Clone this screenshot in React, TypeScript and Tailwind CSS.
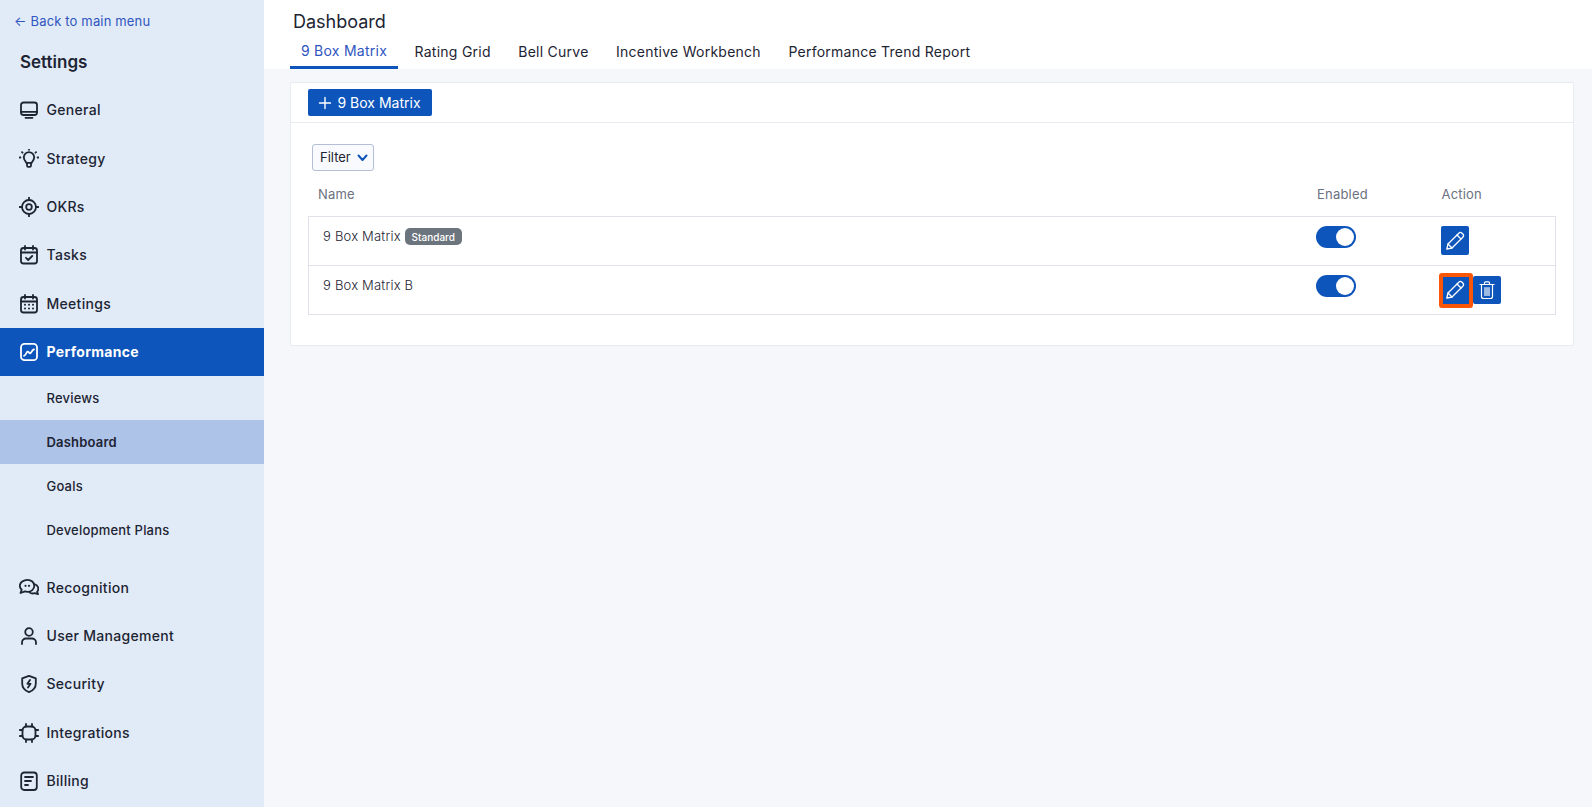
import React from "react";

const Ic = ({ children }: { children: React.ReactNode }) => (
  <svg width="20" height="20" viewBox="0 0 20 20" fill="none" stroke="currentColor" strokeWidth="1.8" strokeLinecap="round" strokeLinejoin="round" className="shrink-0">
    {children}
  </svg>
);

const icons: Record<string, React.ReactNode> = {
  General: (
    <>
      <rect x="2" y="2.500" width="16" height="12.500" rx="2.500" />
      <path d="M2 11.800h16M6.500 17.800h7" />
    </>
  ),
  Strategy: (
    <>
      <path d="M5.300 10.500a5.200 5.200 0 1 1 9.400 0c-.5 1.100-1.500 1.900-1.900 3.300H7.200c-.4-1.400-1.400-2.200-1.900-3.300Z" />
      <path d="M8 14v2.500a1.300 1.300 0 0 0 1.300 1.300h1.400a1.300 1.300 0 0 0 1.300-1.300V14M.600 8.500h.8M18.600 8.500h.8M3 3.200l.5.500M17 3.200l-.5.500M10 .400v.4" />
    </>
  ),
  OKRs: (
    <>
      <circle cx="10" cy="10" r="7" />
      <circle cx="10" cy="10" r="2.800" />
      <path d="M10 .600v2.400M10 17v2.400M.600 10h2.400M17 10h2.400" />
    </>
  ),
  Tasks: (
    <>
      <rect x="2" y="3" width="16" height="15.500" rx="2.500" />
      <path d="M2 7.500h16M6 1v3.500M14 1v3.500M7 12.800l2.200 2.200 4-4" />
    </>
  ),
  Meetings: (
    <>
      <rect x="2" y="3" width="16" height="15.500" rx="2.500" />
      <path d="M2 7.500h16M6 1v3.500M14 1v3.500" />
      <path strokeWidth="2" d="M6 10.800h.01M10 10.800h.01M14 10.800h.01M6 14.600h.01M10 14.600h.01M14 14.600h.01" />
    </>
  ),
  Performance: (
    <>
      <rect x="2" y="1.800" width="16" height="16.400" rx="3.500" />
      <path d="M5 13.800c1.500-.5 2.100-1.900 2.700-3.300.5-1 1.400-1.200 2-.3.600.9 1.300 1.500 2.100.7.900-.9 1-2.600 3.200-3.500" />
    </>
  ),
  Recognition: (
    <>
      <path d="M8.500 1.800c3.800 0 6.800 2.600 6.800 6s-3 6-6.800 6c-.9 0-1.700-.1-2.500-.4L1.500 15l1.200-3.300C1.400 10.600.800 9.300.800 7.800c0-3.400 3.900-6 7.700-6Z" />
      <path d="M15.300 6.200c2.300.7 4 2.400 4 4.600 0 1.200-.5 2.200-1.200 3l.9 2.300-3.400-1c-1.400.5-3.700.4-5.100-.7" />
      <path strokeWidth="2.200" d="M6.500 7.800h.01M10 7.800h.01" />
    </>
  ),
  "User Management": (
    <>
      <circle cx="10" cy="6" r="3.800" />
      <path d="M3 18v-1.500A4 4 0 0 1 7 12.500h6a4 4 0 0 1 4 4V18" />
    </>
  ),
  Security: (
    <>
      <path d="M10 1.800l6.800 2.500v5.200c0 4.200-3 7.200-6.800 8.700-3.800-1.500-6.800-4.500-6.800-8.700V4.300L10 1.800Z" />
      <path d="M11 6l-2.600 3.800h3.200L9 13.500" />
    </>
  ),
  Integrations: (
    <>
      <rect x="3.500" y="3.500" width="13" height="13" rx="4" />
      <path d="M7 1v2.500M13 1v2.500M7 16.500V19M13 16.500V19M.8 7h2.700M.8 13h2.700M16.500 7h2.700M16.500 13h2.700" />
    </>
  ),
  Billing: (
    <>
      <rect x="2.200" y="1.500" width="15.600" height="17.500" rx="3" />
      <path d="M6 6h8M6 10h6M6 14h3" />
    </>
  ),
};

const Row = ({ label, active }: { label: string; active?: boolean }) => (
  <div className={`flex h-[48.4px] items-center gap-[7.500px] pl-[19px] text-[14px] tracking-[0.3px] ${active ? "bg-[#0d55bb] font-bold text-white" : "font-medium text-[#1d2433]"}`}>
    <Ic>{icons[label]}</Ic>
    <span className="pb-[1px]">{label}</span>
  </div>
);

const SubRow = ({ label, active }: { label: string; active?: boolean }) => (
  <div className={`flex h-[44px] items-center pl-[46.500px] text-[13px] font-medium tracking-[0.2px] text-[#1d2433] ${active ? "bg-[#aec3e8] font-semibold" : ""}`}>
    {label}
  </div>
);

const Pencil = () => (
  <svg width="20" height="20" viewBox="0 0 20 20" fill="none" stroke="white" strokeWidth="1.300" strokeLinejoin="round" strokeLinecap="round" className="-ml-[1px]">
    <path d="M13.800 2.200a2.300 2.300 0 0 1 3.200 0l.8.8a2.300 2.300 0 0 1 0 3.200L7 17l-5.200 1.200L3 13 13.800 2.200Z" />
    <path d="M12 4l4 4M3 13l4 4" />
  </svg>
);

const Trash = () => (
  <svg width="18" height="20" viewBox="0 0 18 20" fill="none" stroke="white" strokeWidth="1.200" strokeLinejoin="round" strokeLinecap="round" className="-ml-[1px]">
    <path d="M2 4.500h14M6.500 4.500V2.800a1 1 0 0 1 1-1h3a1 1 0 0 1 1 1v1.700" />
    <path d="M3.500 4.500v12a2 2 0 0 0 2 2h7a2 2 0 0 0 2-2v-12M7 7.500v8M9 7.500v8M11 7.500v8" />
  </svg>
);

const Toggle = () => (
  <div className="flex h-[22px] w-[40px] items-center justify-end rounded-full bg-[#0d55bb] pr-[2px]">
    <div className="h-[18px] w-[18px] rounded-full bg-white" />
  </div>
);

const tabs = ["9 Box Matrix", "Rating Grid", "Bell Curve", "Incentive Workbench", "Performance Trend Report"];

export default function App() {
  return (
    <div className="flex h-[807px] w-full overflow-hidden bg-[#f5f7fb] font-['Inter',sans-serif] text-[#1d2433]">
      <aside className="w-[264px] shrink-0 bg-[#e1ebf7]">
        <div className="flex h-[44px] items-center gap-[4px] pl-[14px] text-[13px] tracking-[0.15px] text-[#2f55c0]">
          <span>←</span>
          <span>Back to main menu</span>
        </div>
        <div className="flex h-[42px] items-center pb-[5px] pl-[20px] text-[17px] font-semibold">Settings</div>
        <Row label="General" />
        <Row label="Strategy" />
        <Row label="OKRs" />
        <Row label="Tasks" />
        <Row label="Meetings" />
        <Row label="Performance" active />
        <SubRow label="Reviews" />
        <SubRow label="Dashboard" active />
        <SubRow label="Goals" />
        <SubRow label="Development Plans" />
        <div className="h-[11px]" />
        <Row label="Recognition" />
        <Row label="User Management" />
        <Row label="Security" />
        <Row label="Integrations" />
        <Row label="Billing" />
      </aside>

      <main className="min-w-0 flex-1">
        <header className="h-[69px] bg-white pl-[26px]">
          <div className="pl-[3px] pt-[11px] text-[18px] leading-[22px]">Dashboard</div>
          <nav className="mt-[7px] flex gap-[5.500px]">
            {tabs.map((t, i) => (
              <div key={t} className={`flex h-[29px] items-center px-[11px] pb-[6px] text-[14px] tracking-[0.25px] ${i === 0 ? "border-b-[3px] border-[#0d55bb] pb-[3px] text-[#2f55c0]" : "text-[#1d2433]"}`}>
                {t}
              </div>
            ))}
          </nav>
        </header>

        <section className="ml-[26px] mr-[18px] mt-[13px] h-[264px] rounded-[2px] border border-[#e8ebf1] bg-white">
          <div className="flex h-[40px] items-start border-b border-[#e8ebf1] pl-[17px] pt-[6px]">
            <button className="flex h-[27px] w-[124px] items-center justify-center gap-[5px] rounded-[2px] bg-[#0d55bb] pr-[1px] text-[14px] text-white">
              <svg width="14" height="14" viewBox="0 0 14 14" stroke="white" strokeWidth="1.400" strokeLinecap="round">
                <path d="M7 1.500v11M1.500 7h11" />
              </svg>
              9 Box Matrix
            </button>
          </div>

          <div className="pl-[21px] pt-[21px]">
            <div className="flex h-[27px] w-[62px] items-center gap-[6px] rounded-[3px] border border-[#b4bfd6] bg-[#f8fafd] pl-[7px] text-[13px]">
              Filter
              <svg width="11" height="8" viewBox="0 0 11 8" fill="none" stroke="#0d55bb" strokeWidth="2" strokeLinecap="round" strokeLinejoin="round">
                <path d="M1.500 1.500 5.500 6l4-4.500" />
              </svg>
            </div>
          </div>

          <div className="ml-[17px] mr-[17px] mt-[14px]">
            <div className="flex h-[31px] text-[13px] tracking-[0.2px] text-[#6b7280]">
              <div className="flex-1 pl-[10px]">Name</div>
              <div className="w-[124.500px]">Enabled</div>
              <div className="w-[114.500px]">Action</div>
            </div>
            <div className="border border-[#dfe2ea]">
              <div className="flex h-[49px] border-b border-[#dfe2ea]">
                <div className="flex flex-1 items-start gap-[4px] pl-[14px] pt-[11px] text-[13px] font-light leading-[16px] tracking-[0.2px]">
                  9 Box Matrix
                  <span className="flex h-[17px] w-[57px] items-center justify-center rounded-[5px] bg-[#6c757d] text-[10px] font-medium tracking-normal text-white">Standard</span>
                </div>
                <div className="w-[125px] pt-[9px]"><Toggle /></div>
                <div className="w-[114px] pt-[9px]">
                  <button className="flex h-[29px] w-[28px] items-center justify-center rounded-[2px] bg-[#0d55bb]"><Pencil /></button>
                </div>
              </div>
              <div className="flex h-[48px]">
                <div className="flex-1 pl-[14px] pt-[11px] text-[13px] font-light leading-[16px] tracking-[0.2px]">9 Box Matrix B</div>
                <div className="w-[125px] pt-[9px]"><Toggle /></div>
                <div className="flex w-[114px] items-start pt-[10px]">
                  <button className="relative flex h-[28px] w-[28px] items-center justify-center bg-[#0d55bb]">
                    <Pencil />
                    <span className="absolute -bottom-[4px] -left-[2px] -right-[4px] -top-[3px] rounded-[3px] border-[4px] border-[#fb5607]" />
                  </button>
                  <button className="ml-[4px] flex h-[28px] w-[28px] items-center justify-center rounded-[2px] bg-[#0d55bb]"><Trash /></button>
                </div>
              </div>
            </div>
          </div>
        </section>
      </main>
    </div>
  );
}
